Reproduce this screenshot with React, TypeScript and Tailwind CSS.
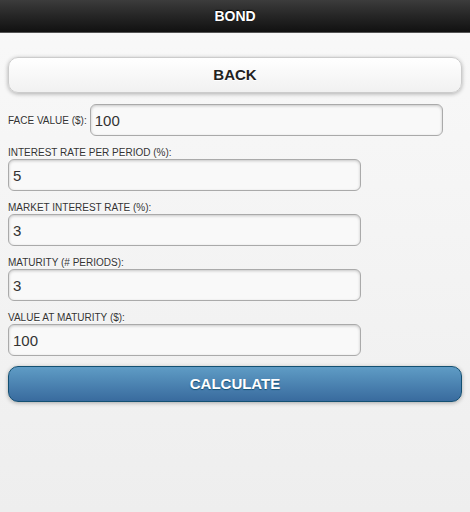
const fields = [
  { label: "INTEREST RATE PER PERIOD (%):", value: "5" },
  { label: "MARKET INTEREST RATE (%):", value: "3" },
  { label: "MATURITY (# PERIODS):", value: "3" },
  { label: "VALUE AT MATURITY ($):", value: "100" },
];

const inputClass =
  "w-[353px] h-[32px] rounded-[6px] border border-[#aaaaaa] bg-[#f9f9f9] px-[4px] text-[15px] text-[#333] shadow-[inset_0_1px_3px_rgba(0,0,0,0.2)] outline-none";

const App = () => {
  return (
    <div
      className="w-[470px] h-[512px] bg-gradient-to-b from-[#f9f9f9] to-[#eeeeee] text-[#333]"
      style={{ fontFamily: '"Liberation Sans", Arial, sans-serif' }}
    >
      <div className="h-[33px] flex items-center justify-center bg-gradient-to-b from-[#3c3c3c] to-[#111111] border-b border-[#555] text-white font-bold text-[14px] [text-shadow:0_-1px_1px_#000]">
        BOND
      </div>

      <div className="px-[8px]">
        <button className="mt-[24px] w-full h-[36px] rounded-[10px] border border-[#cccccc] bg-gradient-to-b from-white to-[#f1f1f1] shadow-[0_1px_4px_rgba(0,0,0,0.3)] font-bold text-[15px] text-[#222] [text-shadow:0_1px_0_#fff]">
          BACK
        </button>

        <div className="mt-[11px] flex items-center gap-[3px]">
          <label className="text-[10px] text-[#333] [text-shadow:0_1px_0_#fff]">
            FACE VALUE ($):
          </label>
          <input className={inputClass} defaultValue="100" />
        </div>

        {fields.map((f) => (
          <div key={f.label} className="mt-[11px] flex flex-col">
            <label className="text-[10px] leading-[12px] text-[#333] [text-shadow:0_1px_0_#fff]">
              {f.label}
            </label>
            <input className={inputClass} defaultValue={f.value} />
          </div>
        ))}

        <button className="mt-[10px] w-full h-[36px] rounded-[10px] border border-[#145072] bg-gradient-to-b from-[#5f9cc5] to-[#396b9e] shadow-[0_1px_4px_rgba(0,0,0,0.3)] font-bold text-[15px] text-white [text-shadow:0_1px_1px_#145072]">
          CALCULATE
        </button>
      </div>
    </div>
  );
};

export default App;
